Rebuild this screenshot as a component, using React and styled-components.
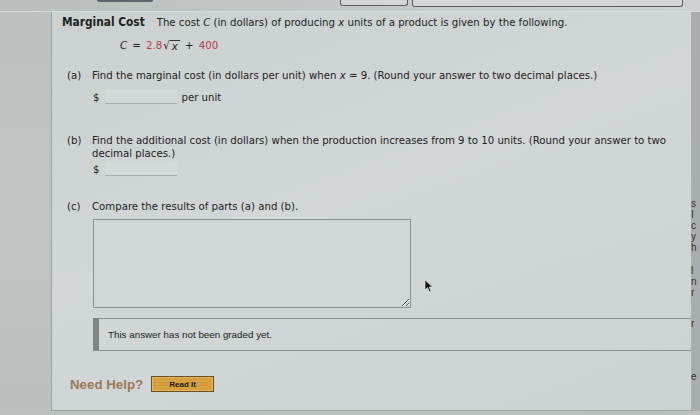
import React from "react";
import styled, { createGlobalStyle } from "styled-components";

const Global = createGlobalStyle`
  html, body { margin: 0; padding: 0; background: #bfc3c2; }
  body { font-family: "DejaVu Sans Condensed", "DejaVu Sans", sans-serif; }
`;

const Screen = styled.div`
  width: 700px;
  height: 415px;
  overflow: hidden;
  position: relative;
  display: flex;
  flex-direction: column;
  background: #bcc0bf;
`;

const TopBar = styled.div`
  height: 12px;
  flex: none;
  display: flex;
  align-items: flex-start;
  padding-left: 97px;
  background: linear-gradient(90deg, #b9bdbc 0%, #c6caca 60%, #cfd2d2 100%);
  border-bottom: 1px solid #d9dcdc;
  box-sizing: border-box;
`;

const TopTab = styled.div`
  width: ${(p) => p.w}px;
  height: ${(p) => p.h}px;
  margin-left: ${(p) => p.ml || 0}px;
  background: ${(p) => (p.dark ? "#5d646b" : "#d3d6d6")};
  border: ${(p) => (p.dark ? "none" : "1px solid #5a5e60")};
  border-top: none;
  border-radius: 0 0 3px 3px;
  box-sizing: border-box;
`;

const Body = styled.div`
  display: flex;
  height: 399px;
  flex: none;
`;

const LeftRail = styled.div`
  width: 51px;
  flex: none;
  background: linear-gradient(180deg, #bcc0bf 0%, #c0c4c3 50%, #bbbfbe 100%);
`;

const Main = styled.div`
  flex: 1;
  border-left: 1px solid #9ea3a3;
  border-bottom: 1px solid #9ea3a3;
  background: linear-gradient(160deg, #cbd0d0 0%, #d2d6d6 45%, #cdd2d2 100%);
  padding: 4px 0 0 10px;
  box-sizing: border-box;
  display: flex;
  flex-direction: column;
  color: #212324;
  font-size: 11.3px;
  line-height: 13px;
`;

const RightStrip = styled.div`
  width: 9px;
  flex: none;
  background: #a9adad;
  overflow: hidden;
  display: flex;
  flex-direction: column;
  font-family: "Liberation Sans", sans-serif;
  font-size: 10px;
  color: #333;
  padding-top: 186px;
  line-height: 11px;
  box-sizing: border-box;
`;

const Frag = styled.span`
  margin-top: ${(p) => p.mt || 0}px;
  white-space: nowrap;
`;

const TitleRow = styled.div`
  display: flex;
  gap: 12px;
  white-space: nowrap;
`;

const Title = styled.span`
  font-weight: bold;
  font-size: 11.8px;
  color: #1d1f20;
`;

const Ital = styled.i`
  font-style: italic;
`;

const Formula = styled.div`
  margin: 10px 0 0 58px;
  display: flex;
  align-items: baseline;
  white-space: pre;
  word-spacing: 1px;
`;

const Red = styled.span`
  color: #b2404a;
`;

const Op = styled.span`
  padding: 0 1px;
`;

const Sqrt = styled.span`
  display: inline-flex;
  align-items: flex-end;
  margin-left: 1px;
`;

const Radicand = styled.span`
  border-top: 1px solid #2b2d2e;
  padding: 0 2px;
  line-height: 11px;
`;

const Part = styled.div`
  display: flex;
  margin-top: ${(p) => p.mt}px;
  padding-left: 5px;
`;

const PartLabel = styled.span`
  width: 25px;
  flex: none;
`;

const PartText = styled.div`
  white-space: nowrap;
`;

const AnswerRow = styled.div`
  display: flex;
  align-items: center;
  height: 14px;
  margin: ${(p) => p.mt}px 0 0 31px;
  gap: 4px;
`;

const Blank = styled.span`
  width: 72px;
  height: 14px;
  box-sizing: border-box;
  border-bottom: 1px solid #a9aeae;
  background: rgba(215, 220, 220, 0.6);
  margin-left: 2px;
`;

const Answer = styled.textarea`
  margin: 6px 0 0 31px;
  width: 318px;
  height: 89px;
  box-sizing: border-box;
  border: 1px solid #8d9292;
  background: #d1d6d6;
  resize: both;
  outline: none;
`;

const Feedback = styled.div`
  margin-top: 10px;
  margin-left: 31px;
  height: 33px;
  box-sizing: border-box;
  border-top: 1px solid #8c9191;
  border-bottom: 1px solid #8c9191;
  border-left: 6px solid #7f8484;
  display: flex;
  align-items: center;
  padding-left: 9px;
  font-family: "Liberation Sans", Arial, sans-serif;
  font-size: 9.8px;
  color: #202223;
`;

const HelpRow = styled.div`
  display: flex;
  align-items: center;
  margin: 25px 0 0 8px;
  gap: 8px;
`;

const HelpLabel = styled.span`
  font-family: "Liberation Sans", Arial, sans-serif;
  font-weight: bold;
  font-size: 13.3px;
  color: #9d7a55;
`;

const ReadIt = styled.button`
  width: 63px;
  height: 16px;
  padding: 0;
  background: #d6a041;
  border: 1px solid #6e5027;
  box-shadow: inset 0 0 0 1px #e4b560;
  font-family: "Liberation Sans", Arial, sans-serif;
  font-weight: bold;
  font-size: 8px;
  color: #1e1a12;
`;

const Cursor = styled.svg`
  position: absolute;
  left: 424px;
  top: 279px;
`;

export default function App() {
  return (
    <>
      <Global />
      <Screen>
        <TopBar>
          <TopTab dark w={56} h={2} />
          <TopTab w={68} h={6} ml={187} />
          <TopTab w={271} h={7} ml={4} />
        </TopBar>
        <Body>
          <LeftRail />
          <Main>
            <TitleRow>
              <Title>Marginal Cost</Title>
              <span>
                The cost <Ital>C</Ital> (in dollars) of producing <Ital>x</Ital> units of a product is given by the following.
              </span>
            </TitleRow>
            <Formula>
              <Ital>C</Ital>
              <Op> = </Op>
              <Red>2.8</Red>
              <Sqrt>
                <span>√</span>
                <Radicand>
                  <Ital>x</Ital>
                </Radicand>
              </Sqrt>
              <Op> + </Op>
              <Red>400</Red>
            </Formula>
            <Part mt={17}>
              <PartLabel>(a)</PartLabel>
              <PartText>
                Find the marginal cost (in dollars per unit) when <Ital>x</Ital> = 9. (Round your answer to two decimal places.)
              </PartText>
            </Part>
            <AnswerRow mt={8}>
              <span>$</span>
              <Blank />
              <span>per unit</span>
            </AnswerRow>
            <Part mt={30}>
              <PartLabel>(b)</PartLabel>
              <PartText>
                Find the additional cost (in dollars) when the production increases from 9 to 10 units. (Round your answer to two
                <br />
                decimal places.)
              </PartText>
            </Part>
            <AnswerRow mt={2}>
              <span>$</span>
              <Blank />
            </AnswerRow>
            <Part mt={24}>
              <PartLabel>(c)</PartLabel>
              <PartText>Compare the results of parts (a) and (b).</PartText>
            </Part>
            <Answer defaultValue="" />
            <Feedback>This answer has not been graded yet.</Feedback>
            <HelpRow>
              <HelpLabel>Need Help?</HelpLabel>
              <ReadIt>Read It</ReadIt>
            </HelpRow>
          </Main>
          <RightStrip>
            <Frag>s</Frag>
            <Frag>I</Frag>
            <Frag>c</Frag>
            <Frag>y</Frag>
            <Frag>h</Frag>
            <Frag mt={12}>l</Frag>
            <Frag>n</Frag>
            <Frag>r</Frag>
            <Frag mt={20}>r</Frag>
            <Frag mt={42}>e</Frag>
          </RightStrip>
        </Body>
        <Cursor width="10" height="14" viewBox="0 0 10 14">
          <path d="M1 1 L1 11 L3.5 8.6 L5.4 13 L7 12.3 L5.2 8 L8.6 8 Z" fill="#111" stroke="#eee" strokeWidth="0.6" />
        </Cursor>
      </Screen>
    </>
  );
}
